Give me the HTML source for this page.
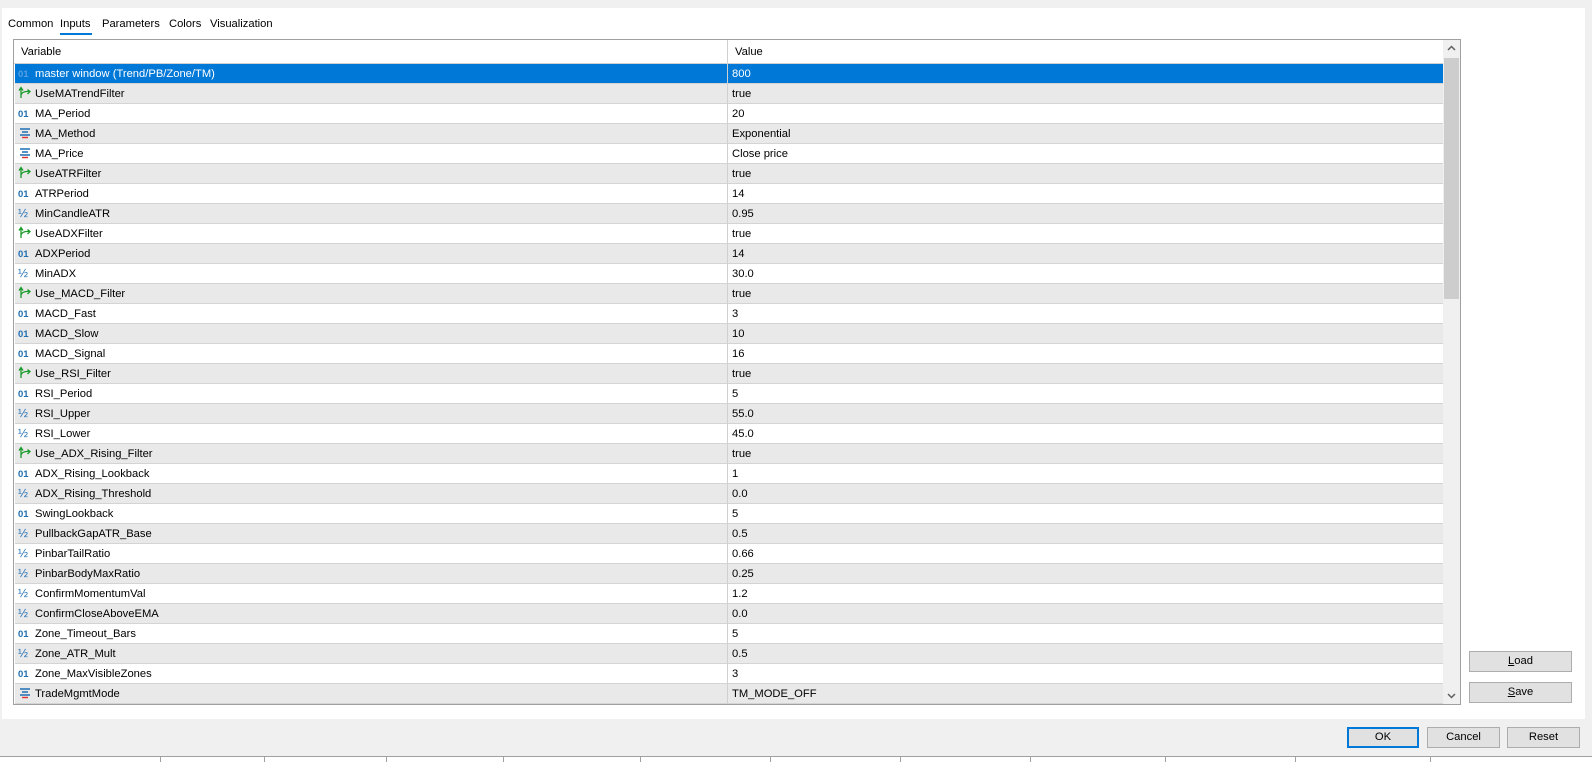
<!DOCTYPE html>
<html><head><meta charset="utf-8"><style>
*{box-sizing:border-box;margin:0;padding:0}
body{width:1592px;height:762px;background:#f0f0f0;font-family:"Liberation Sans",sans-serif;font-size:11.2px;color:#000;position:relative;overflow:hidden}
.panel{position:absolute;left:2px;top:8px;width:1583px;height:711px;background:#fff}
.tab{position:absolute;top:10px;font-size:11.2px}
.tbl{position:absolute;left:13px;top:39px;width:1448px;height:666px;border:1px solid #a0a0a0;background:#fff;overflow:hidden}
.hdr{position:absolute;left:0;top:0;width:1429px;height:24px;border-bottom:1px solid #d0d0d0}
.hdr span{position:absolute;top:6px}
.row{position:absolute;left:1px;width:1428px;height:20px;border-bottom:1px solid #d4d4d4}
.row.g{background:#e9e9e9}
.row.sel{background:#0078d7;color:#fff}
.row .n{position:absolute;left:20px;top:4px}
.row .v{position:absolute;left:717px;top:4px}
.row .ic{position:absolute;left:3px;top:3px;width:14px;height:13px;font-size:9.5px;color:#1f6fb2;font-weight:bold}
.div{position:absolute;left:713px;top:0;width:1px;height:24px;background:#d0d0d0}
.sb{position:absolute;left:1429px;top:0;width:17px;height:664px;background:#f0f0f0}
.thumb{position:absolute;left:1px;top:18px;width:15px;height:241px;background:#cdcdcd}
.btn{position:absolute;border:1px solid #adadad;background:#e1e1e1;text-align:center;line-height:19px}
</style></head><body>
<div class="panel">
<span class="tab" style="left:6px">Common</span>
<span class="tab" style="left:58px">Inputs</span>
<div style="position:absolute;left:58px;top:25px;width:32px;height:2px;background:#0078d7"></div>
<span class="tab" style="left:100px">Parameters</span>
<span class="tab" style="left:167px">Colors</span>
<span class="tab" style="left:208px">Visualization</span>
</div>
<div class="tbl">
<div class="hdr"><span style="left:7px">Variable</span><span style="left:721px">Value</span></div>
<div class="div"></div>
<div id="rows"></div>
<div class="sb"><svg style="position:absolute;top:5px;left:4px" width="9" height="6" viewBox="0 0 9 6"><path d="M1 5l3.5-3.5L8 5" stroke="#606060" stroke-width="1.5" fill="none"/></svg><div class="thumb"></div><svg style="position:absolute;bottom:5px;left:4px" width="9" height="6" viewBox="0 0 9 6"><path d="M1 1l3.5 3.5L8 1" stroke="#606060" stroke-width="1.5" fill="none"/></svg></div>
</div>
<div class="btn" style="left:1469px;top:651px;width:103px;height:21px"><u>L</u>oad</div>
<div class="btn" style="left:1469px;top:682px;width:103px;height:21px"><u>S</u>ave</div>
<div class="btn" style="left:1347px;top:727px;width:72px;height:21px;border:2px solid #0078d7;line-height:17px">OK</div>
<div class="btn" style="left:1427px;top:727px;width:73px;height:21px">Cancel</div>
<div class="btn" style="left:1507px;top:727px;width:73px;height:21px">Reset</div>
<div style="position:absolute;left:0;top:756px;width:1592px;height:6px;background:#fff;border-top:1px solid #a0a0a0"></div>
<div id="bd"></div>
<script>
var d=[["i","master window (Trend/PB/Zone/TM)","800"],["b","UseMATrendFilter","true"],["i","MA_Period","20"],["e","MA_Method","Exponential"],["e","MA_Price","Close price"],["b","UseATRFilter","true"],["i","ATRPeriod","14"],["h","MinCandleATR","0.95"],["b","UseADXFilter","true"],["i","ADXPeriod","14"],["h","MinADX","30.0"],["b","Use_MACD_Filter","true"],["i","MACD_Fast","3"],["i","MACD_Slow","10"],["i","MACD_Signal","16"],["b","Use_RSI_Filter","true"],["i","RSI_Period","5"],["h","RSI_Upper","55.0"],["h","RSI_Lower","45.0"],["b","Use_ADX_Rising_Filter","true"],["i","ADX_Rising_Lookback","1"],["h","ADX_Rising_Threshold","0.0"],["i","SwingLookback","5"],["h","PullbackGapATR_Base","0.5"],["h","PinbarTailRatio","0.66"],["h","PinbarBodyMaxRatio","0.25"],["h","ConfirmMomentumVal","1.2"],["h","ConfirmCloseAboveEMA","0.0"],["i","Zone_Timeout_Bars","5"],["h","Zone_ATR_Mult","0.5"],["i","Zone_MaxVisibleZones","3"],["e","TradeMgmtMode","TM_MODE_OFF"]];
var h="";
d.forEach(function(r,k){
var ic="";
if(r[0]=="i")ic='<span class="ic" style="top:5px;'+(k==0?'color:#5aa0e0':'')+'">01</span>';
else if(r[0]=="h")ic='<span class="ic" style="font-weight:normal;font-size:12px;top:2px;color:#1f6fb2">&#189;</span>';
else if(r[0]=="b")ic='<svg class="ic" style="top:2px" viewBox="0 0 14 13"><path d="M3 12V2M1 4.5l2-3 2 3M3 9c1-3 4-4 9-3.5M9.5 3.5l2.5 2-2.5 2.5" stroke="#1a9a2a" stroke-width="1.3" fill="none"/></svg>';
else ic='<svg class="ic" style="top:2px" viewBox="0 0 14 13"><path d="M2 3h10M4 6h6M2 9h10" stroke="#1f6fb2" stroke-width="1.4"/><path d="M4 11.5h6" stroke="#e03030" stroke-width="1.4"/></svg>';
var c=k==0?"row sel":(k%2?"row g":"row");
h+='<div class="'+c+'" style="top:'+(24+k*20)+'px">'+ic+'<span class="n">'+r[1]+'</span><div style="position:absolute;left:712px;top:0;width:1px;height:20px;background:#d0d0d0"></div><span class="v">'+r[2]+'</span></div>';});
document.getElementById("rows").innerHTML=h;
var b="";[160,264,386,503,640,770,900,1030,1165,1295,1430].forEach(function(x){b+='<div style="position:absolute;left:'+x+'px;top:756px;width:1px;height:6px;background:#a0a0a0"></div>'});
document.getElementById("bd").innerHTML=b;
</script>
</body></html>
